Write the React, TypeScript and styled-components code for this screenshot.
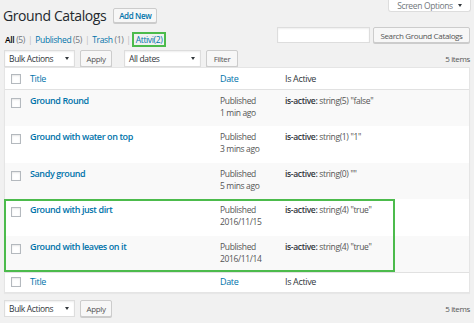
import React from "react";
import styled, { createGlobalStyle } from "styled-components";

const GlobalStyle = createGlobalStyle`
  *, *::before, *::after { box-sizing: border-box; }
  html, body { margin: 0; padding: 0; background: #f1f1f1; }
  body {
    font-family: "Open Sans", "Noto Sans", sans-serif;
    font-size: 8.5px;
    letter-spacing: -0.35px;
    color: #555;
  }
`;

const GREEN = "#4cbb4c";
const BLUE = "#0073aa";

const Page = styled.div`
  width: 474px;
  height: 323px;
  padding: 0 4px;
  display: flex;
  flex-direction: column;
  overflow: hidden;
`;

const HeaderBar = styled.div`
  display: flex;
  justify-content: space-between;
  align-items: flex-start;
  height: 27px;
`;

const TitleGroup = styled.div`
  display: flex;
  align-items: center;
  gap: 7px;
  padding-top: 8px;
`;

const Heading = styled.h1`
  margin: 0 0 0 -1px;
  font-size: 14px;
  font-weight: 400;
  letter-spacing: -0.4px;
  line-height: 15px;
  color: #23282d;
`;

const Button = styled.div<{ $w: number; $h?: number; $primaryText?: boolean }>`
  width: ${(p) => p.$w}px;
  height: ${(p) => p.$h ?? 17}px;
  display: flex;
  align-items: center;
  justify-content: center;
  background: #f7f7f7;
  border: 1px solid #ccc;
  border-radius: 2px;
  box-shadow: 0 1px 0 #ccc;
  color: ${(p) => (p.$primaryText ? BLUE : "#555")};
  font-weight: ${(p) => (p.$primaryText ? 600 : 400)};
  font-size: 8px;
  white-space: nowrap;
`;

const ScreenOptions = styled.div`
  width: 83px;
  height: 12px;
  display: flex;
  align-items: center;
  justify-content: center;
  gap: 5px;
  background: #fff;
  border: 1px solid #ddd;
  border-top: none;
  border-radius: 0 0 3px 3px;
  color: #72777c;
  font-size: 8.5px;
  margin-right: -1px;
`;

const Caret = styled.span`
  display: inline-block;
  width: 0;
  height: 0;
  border-left: 2.5px solid transparent;
  border-right: 2.5px solid transparent;
  border-top: 3.5px solid #32373c;
`;

const FilterBar = styled.div`
  display: flex;
  justify-content: space-between;
  align-items: flex-start;
  height: 22px;
`;

const Views = styled.div`
  height: 15px;
  margin-top: 5px;
  white-space: nowrap;
  line-height: 15px;
  font-size: 8.5px;
  margin-left: 1px;
`;

const Current = styled.span`
  color: #000;
  font-weight: 600;
`;

const ViewLink = styled.span`
  color: ${BLUE};
`;

const Count = styled.span`
  color: #72777c;
`;

const Sep = styled.span`
  color: #bbb;
  margin: 0 3px;
`;

const Highlighted = styled.span`
  display: inline-block;
  border: 2px solid ${GREEN};
  padding: 0 2px;
  height: 15px;
  line-height: 11px;
  vertical-align: top;
  margin-left: -2px;
`;

const SearchBox = styled.div`
  display: flex;
  gap: 3px;
`;

const SearchInput = styled.div`
  width: 93px;
  height: 16px;
  background: #fff;
  border: 1px solid #ddd;
  box-shadow: inset 0 1px 2px rgba(0, 0, 0, 0.07);
`;

const TableNav = styled.div<{ $top?: number }>`
  display: flex;
  align-items: center;
  height: 18px;
  margin-top: ${(p) => p.$top ?? 0}px;
`;

const Select = styled.div<{ $w: number; $ml?: number }>`
  width: ${(p) => p.$w}px;
  height: 17px;
  margin-left: ${(p) => p.$ml ?? 0}px;
  display: flex;
  align-items: center;
  justify-content: space-between;
  padding: 0 5px 0 4px;
  background: #fff;
  border: 1px solid #ddd;
  box-shadow: inset 0 1px 2px rgba(0, 0, 0, 0.07);
  color: #32373c;
  font-size: 8.5px;
`;

const Spacer = styled.div<{ $w: number }>`
  width: ${(p) => p.$w}px;
  flex: none;
`;

const ItemCount = styled.div`
  margin-left: auto;
  color: #555;
  font-size: 8px;
`;

const Table = styled.div`
  width: 466px;
  background: #fff;
  border: 1px solid #e5e5e5;
  box-shadow: 0 1px 1px rgba(0, 0, 0, 0.04);
`;

const Grid = styled.div`
  display: grid;
  grid-template-columns: 21px 190px 65px 1fr;
`;

const HeadRow = styled(Grid)<{ $foot?: boolean }>`
  height: ${(p) => (p.$foot ? 20 : 22)}px;
  align-items: center;
  ${(p) => (p.$foot ? "border-top: 1px solid #e1e1e1;" : "border-bottom: 1px solid #e1e1e1;")}
`;

const BodyRow = styled(Grid)<{ $alt: boolean }>`
  height: 36.4px;
  align-items: start;
  padding-top: 5px;
  background: ${(p) => (p.$alt ? "#f9f9f9" : "#fff")};
`;

const Cell = styled.div`
  padding-left: 4px;
  line-height: 12px;
`;

const CheckCell = styled.div<{ $top?: number }>`
  padding-left: 6px;
  padding-top: ${(p) => p.$top ?? 0}px;
  display: flex;
`;

const Checkbox = styled.span`
  width: 10px;
  height: 10px;
  background: #fff;
  border: 1px solid #b4b9be;
  box-shadow: inset 0 1px 2px rgba(0, 0, 0, 0.1);
`;

const ColLink = styled.span`
  color: ${BLUE};
  font-size: 9px;
`;

const ColLabel = styled.span`
  color: #32373c;
  font-size: 9px;
`;

const RowTitle = styled.span`
  color: ${BLUE};
  font-weight: 600;
  font-size: 9px;
  letter-spacing: -0.4px;
`;

const Key = styled.b`
  color: #32373c;
  font-weight: 600;
`;

const HighlightGroup = styled.div`
  position: relative;
  &::after {
    content: "";
    position: absolute;
    top: 0;
    bottom: 0;
    left: -1px;
    width: 391px;
    border: 2px solid ${GREEN};
    pointer-events: none;
  }
`;

type Item = { title: string; when: string; value: string };

const items: Item[] = [
  { title: "Ground Round", when: "1 min ago", value: 'string(5) "false"' },
  { title: "Ground with water on top", when: "3 mins ago", value: 'string(1) "1"' },
  { title: "Sandy ground", when: "5 mins ago", value: 'string(0) ""' },
  { title: "Ground with just dirt", when: "2016/11/15", value: 'string(4) "true"' },
  { title: "Ground with leaves on it", when: "2016/11/14", value: 'string(4) "true"' },
];

const Row = ({ item, index }: { item: Item; index: number }) => (
  <BodyRow $alt={index % 2 === 0}>
    <CheckCell $top={3}>
      <Checkbox />
    </CheckCell>
    <Cell>
      <RowTitle>{item.title}</RowTitle>
    </Cell>
    <Cell>
      Published
      <br />
      {item.when}
    </Cell>
    <Cell>
      <Key>is-active:</Key> {item.value}
    </Cell>
  </BodyRow>
);

const Columns = ({ foot }: { foot?: boolean }) => (
  <HeadRow $foot={foot}>
    <CheckCell>
      <Checkbox />
    </CheckCell>
    <Cell>
      <ColLink>Title</ColLink>
    </Cell>
    <Cell>
      <ColLink>Date</ColLink>
    </Cell>
    <Cell>
      <ColLabel>Is Active</ColLabel>
    </Cell>
  </HeadRow>
);

export default function App() {
  return (
    <>
      <GlobalStyle />
      <Page>
        <HeaderBar>
          <TitleGroup>
            <Heading>Ground Catalogs</Heading>
            <Button $w={44} $h={15} $primaryText>
              Add New
            </Button>
          </TitleGroup>
          <ScreenOptions>
            Screen Options <Caret />
          </ScreenOptions>
        </HeaderBar>

        <FilterBar>
          <Views>
            <Current>All</Current> <Count>(5)</Count>
            <Sep>|</Sep>
            <ViewLink>Published</ViewLink> <Count>(5)</Count>
            <Sep>|</Sep>
            <ViewLink>Trash</ViewLink> <Count>(1)</Count>
            <Sep>|</Sep>
            <Highlighted>
              <ViewLink>Attivi(2)</ViewLink>
            </Highlighted>
          </Views>
          <SearchBox>
            <SearchInput />
            <Button $w={97} $h={16}>
              Search Ground Catalogs
            </Button>
          </SearchBox>
        </FilterBar>

        <TableNav>
          <Select $w={71}>
            Bulk Actions <Caret />
          </Select>
          <Spacer $w={5} />
          <Button $w={32}>Apply</Button>
          <Select $w={77} $ml={12}>
            All dates <Caret />
          </Select>
          <Spacer $w={5} />
          <Button $w={32}>Filter</Button>
          <ItemCount>5 items</ItemCount>
        </TableNav>

        <Table>
          <Columns />
          {items.slice(0, 3).map((it, i) => (
            <Row key={it.title} item={it} index={i} />
          ))}
          <HighlightGroup>
            {items.slice(3).map((it, i) => (
              <Row key={it.title} item={it} index={i + 3} />
            ))}
          </HighlightGroup>
          <Columns foot />
        </Table>

        <TableNav $top={7}>
          <Select $w={71}>
            Bulk Actions <Caret />
          </Select>
          <Spacer $w={5} />
          <Button $w={32}>Apply</Button>
          <ItemCount>5 items</ItemCount>
        </TableNav>
      </Page>
    </>
  );
}
